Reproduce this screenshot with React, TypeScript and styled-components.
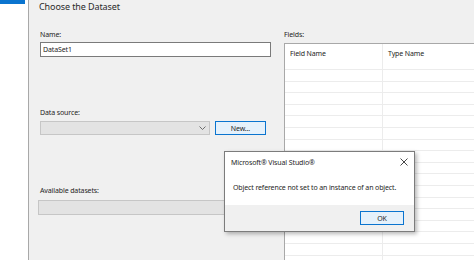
import styled, { createGlobalStyle } from 'styled-components';

const Global = createGlobalStyle`
   html, body {
      margin: 0;
      padding: 0;
      background: #ffffff;
   }
   body {
      font-family: 'Noto Sans', 'Open Sans', sans-serif;
      color: #1e1e1e;
   }
`;

const Page = styled.div`
   position: relative;
   display: flex;
   width: 474px;
   height: 260px;
   overflow: hidden;
`;

const SideStrip = styled.div`
   width: 28px;
   flex-shrink: 0;
   background: #ffffff;
   border-right: 1px solid #a8a8a8;
`;

const SideTab = styled.div`
   width: 25px;
   height: 4px;
   background: #0a74cf;
`;

const Panel = styled.div`
   flex: 1;
   background: #f0f0f0;
   padding: 1px 0 0 10px;
   display: flex;
   flex-direction: column;
`;

const Title = styled.div`
   font-size: 9px;
   line-height: 11px;
   letter-spacing: -0.1px;
   color: #2a2a2a;
`;

const Columns = styled.div`
   flex: 1;
   display: grid;
   grid-template-columns: 231px 1fr;
   column-gap: 14px;
   padding-top: 18px;
   min-height: 0;
`;

const FormColumn = styled.div`
   display: flex;
   flex-direction: column;
   padding-left: 1px;
`;

const Label = styled.div<{ $top?: number; $gap?: number }>`
   font-size: 7px;
   line-height: 10px;
   letter-spacing: -0.12px;
   margin-top: ${p => p.$top ?? 0}px;
   margin-bottom: ${p => p.$gap ?? 2}px;
   color: #1e1e1e;
`;

const TextBox = styled.div`
   height: 13px;
   width: 227px;
   background: #ffffff;
   border: 1px solid #7a7a7a;
   font-size: 7px;
   letter-spacing: -0.12px;
   line-height: 13px;
   padding-left: 2px;
`;

const Row = styled.div`
   display: flex;
   align-items: center;
   gap: 5px;
`;

const Combo = styled.div`
   width: 170px;
   height: 14px;
   box-sizing: border-box;
   background: #e3e3e3;
   border: 1px solid #c6c6c6;
   display: flex;
   justify-content: flex-end;
   align-items: center;
   padding-right: 3px;
`;

const Button = styled.div<{ $w: number }>`
   width: ${p => p.$w}px;
   height: 14px;
   box-sizing: border-box;
   background: #e5f1fb;
   border: 1.5px solid #0a74cf;
   font-size: 7px;
   letter-spacing: -0.12px;
   display: flex;
   align-items: center;
   justify-content: center;
   color: #1e1e1e;
`;

const WideBar = styled.div`
   width: 230px;
   height: 13px;
   margin-left: -2px;
   background: #e3e3e3;
   border: 1px solid #c6c6c6;
`;

const FieldsColumn = styled.div`
   display: flex;
   flex-direction: column;
   min-width: 0;
`;

const FieldsGrid = styled.div`
   flex: 1;
   margin-top: 2px;
   background: #ffffff;
   border-top: 1px solid #a8a8a8;
   border-left: 1px solid #a8a8a8;
   display: grid;
   grid-template-columns: 98px 1fr;
   grid-template-rows: 26px;
   grid-auto-rows: 11.6px;
`;

const HeadCell = styled.div<{ $last?: boolean }>`
   font-size: 7px;
   letter-spacing: -0.12px;
   padding: 5px 0 0 5px;
   border-right: ${p => (p.$last ? 'none' : '1px solid #ececec')};
   border-bottom: 1px solid #ececec;
`;

const Cell = styled.div<{ $last?: boolean }>`
   border-right: ${p => (p.$last ? 'none' : '1px solid #ececec')};
   border-bottom: 1px solid #ececec;
`;

const Dialog = styled.div`
   position: absolute;
   left: 224px;
   top: 151px;
   width: 189px;
   height: 79px;
   background: #ffffff;
   border: 1px solid #7c7c7c;
   box-shadow: 2px 2px 4px rgba(0, 0, 0, 0.28);
   display: flex;
   flex-direction: column;
`;

const DialogHead = styled.div`
   display: flex;
   justify-content: space-between;
   align-items: center;
   padding: 3px 6px 0 6px;
   font-size: 7px;
   letter-spacing: -0.12px;
   height: 14px;
`;

const DialogText = styled.div`
   flex: 1;
   font-size: 7px;
   letter-spacing: -0.12px;
   padding: 14px 0 0 8px;
`;

const DialogFoot = styled.div`
   height: 26px;
   background: #f0f0f0;
   display: flex;
   justify-content: flex-end;
   align-items: center;
   padding-right: 10px;
`;

const Close = () => (
   <svg width="8" height="8" viewBox="0 0 8 8">
      <path d="M0.5 0.5 L7.5 7.5 M7.5 0.5 L0.5 7.5" stroke="#333" strokeWidth="0.9" />
   </svg>
);

const Chevron = () => (
   <svg width="7" height="4" viewBox="0 0 7 4">
      <path d="M0.5 0.5 L3.5 3.5 L6.5 0.5" stroke="#606060" strokeWidth="0.9" fill="none" />
   </svg>
);

const App = () => {
   const rows = Array.from({ length: 17 });
   return (
      <Page>
         <Global />
         <SideStrip>
            <SideTab />
         </SideStrip>
         <Panel>
            <Title>Choose the Dataset</Title>
            <Columns>
               <FormColumn>
                  <Label>Name:</Label>
                  <TextBox>DataSet1</TextBox>
                  <Label $top={51} $gap={3}>Data source:</Label>
                  <Row>
                     <Combo>
                        <Chevron />
                     </Combo>
                     <Button $w={51}>New...</Button>
                  </Row>
                  <Label $top={51} $gap={4}>Available datasets:</Label>
                  <WideBar />
               </FormColumn>
               <FieldsColumn>
                  <Label $gap={1}>Fields:</Label>
                  <FieldsGrid>
                     <HeadCell>Field Name</HeadCell>
                     <HeadCell $last>Type Name</HeadCell>
                     {rows.map((_, i) => [
                        <Cell key={'a' + i} />,
                        <Cell key={'b' + i} $last />,
                     ])}
                  </FieldsGrid>
               </FieldsColumn>
            </Columns>
         </Panel>
         <Dialog>
            <DialogHead>
               <span>Microsoft® Visual Studio®</span>
               <Close />
            </DialogHead>
            <DialogText>Object reference not set to an instance of an object.</DialogText>
            <DialogFoot>
               <Button $w={44}>OK</Button>
            </DialogFoot>
         </Dialog>
      </Page>
   );
};

export default App;
